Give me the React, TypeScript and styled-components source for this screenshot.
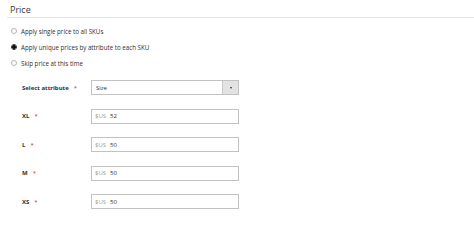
import React from "react";
import styled, { createGlobalStyle } from "styled-components";

const Global = createGlobalStyle`
  html, body { margin: 0; padding: 0; background: #fff; }
  body { font-family: "Open Sans", "Noto Sans", sans-serif; color: #303030; }
`;

const Section = styled.section`
  width: 474px;
  height: 220px;
  padding-left: 7px;
  box-sizing: border-box;
  overflow: hidden;
`;

const Title = styled.h2`
  margin: 0;
  height: 17px;
  padding-left: 3px;
  font-size: 9px;
  font-weight: 400;
  line-height: 19px;
  color: #3a3a3a;
  border-bottom: 1px solid #e6e6e6;
`;

const RadioList = styled.div`
  display: flex;
  flex-direction: column;
  margin-top: 5px;
  padding-left: 4px;
`;

const RadioRow = styled.label`
  display: flex;
  align-items: center;
  height: 16px;
  gap: 4px;
  font-size: 6.2px;
  color: #303030;
`;

const RadioCircle = styled.span<{ $checked?: boolean }>`
  width: 6px;
  height: 6px;
  border-radius: 50%;
  box-sizing: border-box;
  border: 1px solid ${(p) => (p.$checked ? "#303030" : "#b5b5b5")};
  background: ${(p) => (p.$checked ? "radial-gradient(circle, #111 0 1.6px, #fff 1.8px)" : "#fff")};
  flex: none;
`;

const Fields = styled.div`
  display: flex;
  flex-direction: column;
  gap: 13.5px;
  margin-top: 9px;
  padding-left: 15px;
`;

const FieldRow = styled.div`
  display: flex;
  align-items: center;
  height: 15px;
`;

const Label = styled.div`
  width: 69px;
  flex: none;
  font-size: 6px;
  font-weight: 700;
  color: #303030;
  display: flex;
  align-items: center;
`;

const Star = styled.span`
  color: #e22626;
  font-weight: 400;
  margin-left: 5px;
  font-size: 6px;
`;

const Box = styled.div`
  width: 148px;
  height: 15px;
  box-sizing: border-box;
  border: 1px solid #c2c2c2;
  display: flex;
  align-items: center;
  font-size: 6px;
  color: #303030;
  background: #fff;
`;

const SelectText = styled.span`
  flex: 1;
  padding-left: 4px;
`;

const SelectButton = styled.span`
  width: 15px;
  height: 100%;
  background: #e3e3e3;
  border-left: 1px solid #c9c9c9;
  display: flex;
  align-items: center;
  justify-content: center;
`;

const Arrow = styled.span`
  width: 0;
  height: 0;
  border-left: 1.5px solid transparent;
  border-right: 1.5px solid transparent;
  border-top: 2px solid #303030;
`;

const Prefix = styled.span`
  color: #9a9a9a;
  padding-left: 3px;
  width: 15px;
`;

const Value = styled.span`
  color: #303030;
`;

const options = [
  { text: "Apply single price to all SKUs", checked: false },
  { text: "Apply unique prices by attribute to each SKU", checked: true },
  { text: "Skip price at this time", checked: false },
];

const prices = [
  { size: "XL", value: "52" },
  { size: "L", value: "50" },
  { size: "M", value: "50" },
  { size: "XS", value: "50" },
];

export default function App() {
  return (
    <>
      <Global />
      <Section>
        <Title>Price</Title>
        <RadioList>
          {options.map((o) => (
            <RadioRow key={o.text}>
              <RadioCircle $checked={o.checked} />
              {o.text}
            </RadioRow>
          ))}
        </RadioList>
        <Fields>
          <FieldRow>
            <Label>
              Select attribute<Star>*</Star>
            </Label>
            <Box>
              <SelectText>Size</SelectText>
              <SelectButton>
                <Arrow />
              </SelectButton>
            </Box>
          </FieldRow>
          {prices.map((p) => (
            <FieldRow key={p.size}>
              <Label>
                {p.size}
                <Star>*</Star>
              </Label>
              <Box>
                <Prefix>$US</Prefix>
                <Value>{p.value}</Value>
              </Box>
            </FieldRow>
          ))}
        </Fields>
      </Section>
    </>
  );
}
